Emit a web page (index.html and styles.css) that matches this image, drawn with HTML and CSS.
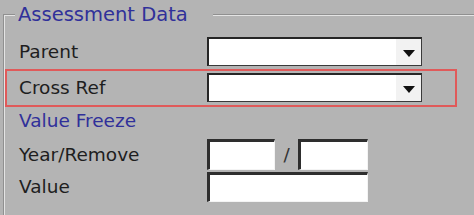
FILE: index.html
```html
<!DOCTYPE html>
<html lang="en">
<head>
    <meta charset="UTF-8">
    <title>Assessment Data</title>
    <link rel="stylesheet" href="styles.css">
</head>
<body>
    <fieldset class="panel">
        <legend class="panel-title">Assessment Data</legend>

        <div class="row">
            <div class="label">Parent</div>
            <div class="combo">
                <div class="combo-text"></div>
                <div class="combo-btn"><span class="arrow"></span></div>
            </div>
        </div>

        <div class="row row-marked">
            <div class="label">Cross Ref</div>
            <div class="combo">
                <div class="combo-text"></div>
                <div class="combo-btn"><span class="arrow"></span></div>
            </div>
        </div>

        <div class="section">Value Freeze</div>

        <div class="row row-year">
            <div class="label">Year/Remove</div>
            <div class="pair">
                <div class="box box-year"></div>
                <span class="slash">/</span>
                <div class="box box-remove"></div>
            </div>
        </div>

        <div class="row row-value">
            <div class="label">Value</div>
            <div class="box box-value"></div>
        </div>
    </fieldset>
</body>
</html>
```

FILE: styles.css
```css
body {
    margin: 0;
    background: #b4b4b4;
    font-family: "DejaVu Sans", Verdana, sans-serif;
    font-size: 18.5px;
    color: #1e1e1e;
    overflow: hidden;
    height: 215px;
}

.panel {
    margin: 4px 0 0 3px;
    padding: 0;
    width: 471px;
    height: 211px;
    box-sizing: border-box;
    border: 2px groove #e4e4e4;
    border-right: none;
    border-bottom: none;
}

.panel-title {
    margin-left: 10px;
    padding: 0 25px 0 3px;
    color: #30309a;
    font-size: 19.5px;
    line-height: 22px;
}

.row {
    display: grid;
    grid-template-columns: 188px auto;
    align-items: center;
    padding-left: 14px;
}

.row:first-of-type {
    margin-top: 11px;
}

.label {
    line-height: 20px;
}

.row-marked {
    width: 452px;
    box-sizing: border-box;
    margin-top: 3px;
    padding: 2px 0 3px 12px;
    border: 2px solid #e05a5a;
}

.combo {
    display: flex;
    width: 215px;
    height: 29px;
    box-sizing: border-box;
    border-top: 2px solid #262626;
    border-left: 2px solid #262626;
    border-right: 1px solid #3a3a3a;
    border-bottom: 1px solid #3a3a3a;
    background: #fff;
}

.combo-text {
    flex: 1;
}

.combo-btn {
    width: 25px;
    background: #f2f2f2;
    border-left: 1px solid #fff;
    display: flex;
    align-items: center;
    justify-content: center;
}

.arrow {
    width: 0;
    height: 0;
    border-left: 6px solid transparent;
    border-right: 6px solid transparent;
    border-top: 7px solid #111;
    margin-top: 2px;
}

.section {
    color: #30309a;
    padding-left: 14px;
    line-height: 26px;
    margin-top: 1px;
}

.row-year {
    margin-top: 5px;
}

.row-value {
    margin-top: 2px;
}

.pair {
    display: flex;
    align-items: center;
}

.box {
    height: 31px;
    box-sizing: border-box;
    border-top: 3px solid #2e2e2e;
    border-left: 3px solid #2e2e2e;
    border-right: 1px solid #f4f4f4;
    border-bottom: 1px solid #f4f4f4;
    background: #fff;
}

.box-year {
    width: 68px;
}

.slash {
    width: 23px;
    text-align: center;
    color: #333;
}

.box-remove {
    width: 70px;
}

.box-value {
    width: 161px;
    height: 30px;
}
```
